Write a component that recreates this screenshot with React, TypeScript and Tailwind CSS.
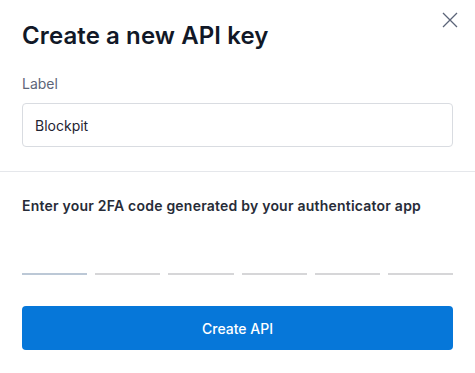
import React from 'react';

export default function App() {
  const slots = [0, 1, 2, 3, 4, 5];
  return (
    <div className="w-[475px] h-[373px] bg-white relative" style={{ fontFamily: 'Inter, "Noto Sans", sans-serif' }}>
      <button className="absolute right-[16px] top-[11px] text-[#5b6478]" aria-label="Close">
        <svg width="18" height="18" viewBox="0 0 18 18" fill="none" stroke="currentColor" strokeWidth="1.3">
          <path d="M2 2L16 16M16 2L2 16" />
        </svg>
      </button>
      <div className="px-[22px] pt-[21px]">
        <h2 className="text-[24px] leading-[30px] font-semibold text-[#111827] tracking-[0.1px]">Create a new API key</h2>
        <label className="block mt-[23px] text-[14px] leading-[20px] text-[#5d6578]">Label</label>
        <div className="mt-[9px] h-[44px] border border-[#d9dce1] rounded-[4px] flex items-center px-[12px] text-[14px] text-[#1f2433]">
          Blockpit
        </div>
      </div>
      <div className="mt-[24px] border-t border-[#e5e7eb]" />
      <div className="px-[22px]">
        <p className="mt-[24px] text-[14px] leading-[20px] font-semibold tracking-[0.22px] text-[#272c38]">
          Enter your 2FA code generated by your authenticator app
        </p>
        <div className="mt-[57px] flex gap-[8px]">
          {slots.map((i) => (
            <div key={i} className={`flex-1 h-[2px] ${i === 0 ? 'bg-[#bcc8d6]' : 'bg-[#d6d6d8]'}`} />
          ))}
        </div>
        <button className="mt-[31px] w-full h-[44px] rounded-[4px] bg-[#0677d9] text-white text-[14px] font-medium">
          Create API
        </button>
      </div>
    </div>
  );
}
